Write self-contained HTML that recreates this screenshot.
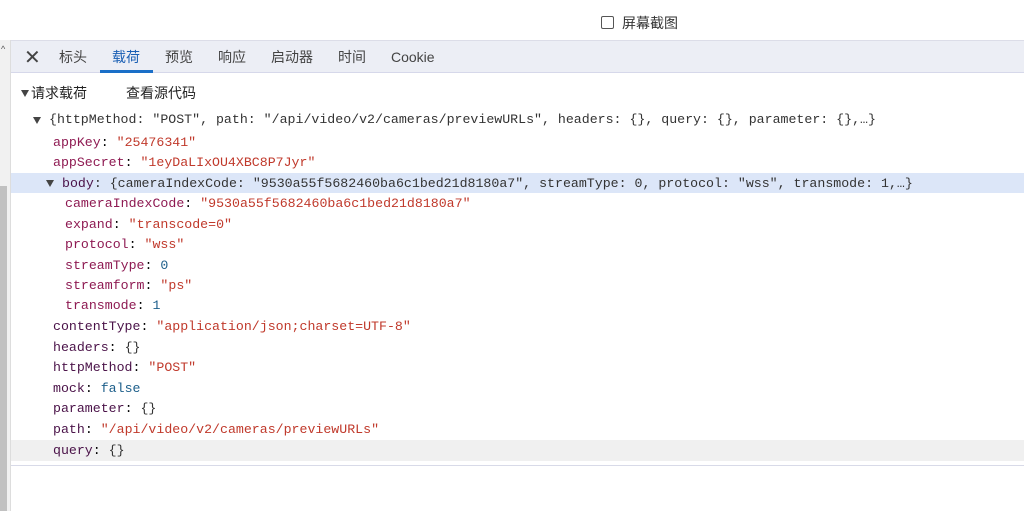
<!DOCTYPE html>
<html><head><meta charset="utf-8"><style>
*{margin:0;padding:0;box-sizing:border-box}
body{width:1024px;height:511px;overflow:hidden;background:#fff;position:relative;font-family:"Liberation Sans","Noto Sans CJK SC",sans-serif}
.mono{font-family:"Liberation Mono","DejaVu Sans Mono",monospace;font-size:13.25px;white-space:pre}
.ln{position:absolute;height:20px;line-height:20px}
.k{color:#8e1a52}.kd{color:#4a1248}.s{color:#c0392b}.n{color:#1c5e8a}.g{color:#333}
.tri{position:absolute;width:0;height:0;border-left:4px solid transparent;border-right:4px solid transparent;border-top:7px solid #444}
.tab span{position:absolute;white-space:nowrap}
</style></head><body>
<div style="position:absolute;left:601px;top:16px;width:13px;height:13px;border:1.5px solid #555;border-radius:2px"></div>
<div style="position:absolute;left:622px;top:14px;font-size:14px;color:#333;line-height:18px;white-space:nowrap">屏幕截图</div>

<div style="position:absolute;left:0;top:40px;width:11px;height:471px;background:#f1f1f1;border-right:1px solid #ddd"></div>
<div style="position:absolute;left:0;top:186px;width:7px;height:325px;background:#c1c1c1"></div>
<div style="position:absolute;left:1px;top:44px;font-size:9px;color:#555">^</div>

<div style="position:absolute;left:11px;top:40px;width:1013px;height:33px;background:#eceef5;border-top:1px solid #dcdde8;border-bottom:1px solid #d6d8ea"></div>
<div style="position:absolute;left:24px;top:47px;font-size:20px;color:#444;line-height:22px">✕</div>
<div class="tab" style="position:absolute;top:48px;left:0;width:1024px;font-size:14px;color:#444;line-height:18px">
<span style="left:59px">标头</span>
<span style="left:112px;color:#1a5fb4">载荷</span>
<span style="left:165px">预览</span>
<span style="left:218px">响应</span>
<span style="left:271px">启动器</span>
<span style="left:338px">时间</span>
<span style="left:391px">Cookie</span>
</div>
<div style="position:absolute;left:100px;top:70px;width:53px;height:3px;background:#1a6fc8"></div>

<div class="tri" style="left:21px;top:90px"></div>
<div style="position:absolute;left:31px;top:83px;font-size:14px;color:#222;line-height:20px;white-space:nowrap">请求载荷</div>
<div style="position:absolute;left:126px;top:83px;font-size:14px;color:#222;line-height:20px;white-space:nowrap">查看源代码</div>

<div style="position:absolute;left:11px;top:173px;width:1013px;height:20px;background:#dce6f8"></div>
<div style="position:absolute;left:11px;top:440px;width:1013px;height:21px;background:#f0f0f0"></div>
<div style="position:absolute;left:11px;top:465px;width:1013px;height:1px;background:#d8dae8"></div>

<div class="tri" style="left:33px;top:117px"></div>
<div class="ln mono g" style="left:49px;top:110px">{httpMethod: "POST", path: "/api/video/v2/cameras/previewURLs", headers: {}, query: {}, parameter: {},…}</div>
<div class="ln mono" style="left:53px;top:133px"><span class="k">appKey</span>: <span class="s">"25476341"</span></div>
<div class="ln mono" style="left:53px;top:153px"><span class="k">appSecret</span>: <span class="s">"1eyDaLIxOU4XBC8P7Jyr"</span></div>
<div class="tri" style="left:46px;top:180px"></div>
<div class="ln mono g" style="left:62px;top:174px"><span class="kd">body</span>: {cameraIndexCode: "9530a55f5682460ba6c1bed21d8180a7", streamType: 0, protocol: "wss", transmode: 1,…}</div>
<div class="ln mono" style="left:65px;top:194px"><span class="k">cameraIndexCode</span>: <span class="s">"9530a55f5682460ba6c1bed21d8180a7"</span></div>
<div class="ln mono" style="left:65px;top:215px"><span class="k">expand</span>: <span class="s">"transcode=0"</span></div>
<div class="ln mono" style="left:65px;top:235px"><span class="k">protocol</span>: <span class="s">"wss"</span></div>
<div class="ln mono" style="left:65px;top:256px"><span class="k">streamType</span>: <span class="n">0</span></div>
<div class="ln mono" style="left:65px;top:276px"><span class="k">streamform</span>: <span class="s">"ps"</span></div>
<div class="ln mono" style="left:65px;top:296px"><span class="k">transmode</span>: <span class="n">1</span></div>
<div class="ln mono" style="left:53px;top:317px"><span class="kd">contentType</span>: <span class="s">"application/json;charset=UTF-8"</span></div>
<div class="ln mono" style="left:53px;top:338px"><span class="kd">headers</span>: <span class="g">{}</span></div>
<div class="ln mono" style="left:53px;top:358px"><span class="kd">httpMethod</span>: <span class="s">"POST"</span></div>
<div class="ln mono" style="left:53px;top:379px"><span class="kd">mock</span>: <span class="n">false</span></div>
<div class="ln mono" style="left:53px;top:399px"><span class="kd">parameter</span>: <span class="g">{}</span></div>
<div class="ln mono" style="left:53px;top:420px"><span class="kd">path</span>: <span class="s">"/api/video/v2/cameras/previewURLs"</span></div>
<div class="ln mono" style="left:53px;top:441px"><span class="kd">query</span>: <span class="g">{}</span></div>
</body></html>
